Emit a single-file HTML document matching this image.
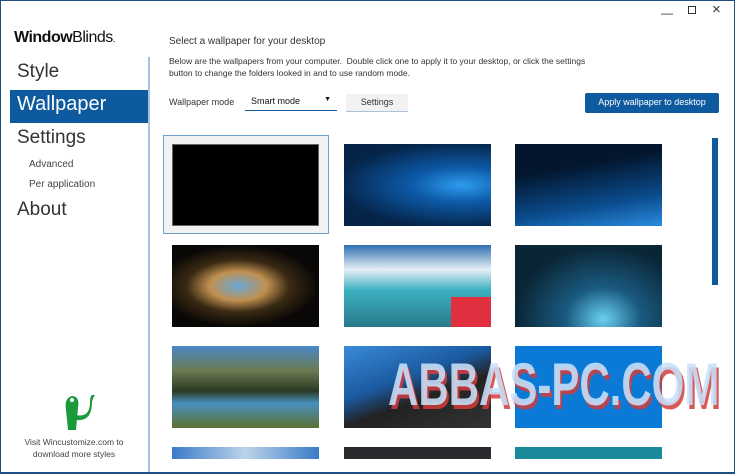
<!DOCTYPE html>
<html><head><style>
*{margin:0;padding:0;box-sizing:border-box}
body{width:735px;height:474px;overflow:hidden;background:#fff;font-family:"Segoe UI","Liberation Sans",sans-serif;position:relative;color:#333}
.frame{position:absolute;left:0;top:0;width:735px;height:474px;border:1px solid #1d4f80;border-bottom:2px solid #1d4f80}
.a{position:absolute}
.t{position:absolute;width:147px;height:82px}
</style></head><body>
<div class="frame"></div>
<div class="a" style="left:661px;top:6px;font-size:12px;color:#333">&#8212;</div>
<div class="a" style="left:688px;top:6px;width:8px;height:8px;border:1px solid #333"></div>
<div class="a" style="left:712px;top:1px;font-size:15px;color:#333">&#215;</div>

<div class="a" style="left:14px;top:29px;font-size:16px;color:#111;letter-spacing:-0.5px"><b>Window</b>Blinds<span style="font-size:10px">.</span></div>
<div class="a" style="left:17px;top:61px;font-size:19px;color:#333">Style</div>
<div class="a" style="left:10px;top:90px;width:139px;height:33px;background:#0d5a9e"></div>
<div class="a" style="left:17px;top:93px;font-size:20px;color:#fff">Wallpaper</div>
<div class="a" style="left:17px;top:127px;font-size:19px;color:#333">Settings</div>
<div class="a" style="left:29px;top:159px;font-size:10px;color:#444">Advanced</div>
<div class="a" style="left:29px;top:179px;font-size:10px;color:#444">Per application</div>
<div class="a" style="left:17px;top:199px;font-size:19px;color:#333">About</div>
<div class="a" style="left:148px;top:57px;width:2px;height:415px;background:#a9c3de"></div>
<svg class="a" style="left:50px;top:390px" width="50" height="45"><path d="M18 40 L16 20 Q14 8 22 6 Q30 6 28 18 L26 40Z" fill="#1a9a3a"/><path d="M26 25 Q40 28 40 12 Q40 2 46 6 Q44 4 42 12 Q42 32 26 30Z" fill="#1a9a3a"/><circle cx="22" cy="10" r="2" fill="#fff"/></svg>
<div class="a" style="left:0;top:436px;width:148px;text-align:center;font-size:8.5px;line-height:12px;color:#444">Visit Wincustomize.com to<br>download more styles</div>

<div class="a" style="left:169px;top:36px;font-size:10px;color:#333">Select a wallpaper for your desktop</div>
<div class="a" style="left:169px;top:55px;font-size:8.5px;line-height:12px;color:#333">Below are the wallpapers from your computer.&nbsp; Double click one to apply it to your desktop, or click the settings<br>button to change the folders looked in and to use random mode.</div>
<div class="a" style="left:169px;top:97px;font-size:9px;color:#333">Wallpaper mode</div>
<div class="a" style="left:245px;top:94px;width:92px;height:17px;border-bottom:1px solid #1a5a9e;font-size:9px;padding:2px 0 0 6px;color:#111">Smart mode<span style="position:absolute;right:6px;top:2px;font-size:7px">&#9660;</span></div>
<div class="a" style="left:346px;top:94px;width:62px;height:18px;background:#f2f2f2;border-bottom:1px solid #a9c3de;font-size:9px;text-align:center;padding-top:3px">Settings</div>
<div class="a" style="left:585px;top:93px;width:134px;height:20px;background:#0d5a9e;border-radius:2px;color:#fff;font-size:9px;text-align:center;padding-top:4px">Apply wallpaper to desktop</div>

<div class="a" style="left:163px;top:135px;width:166px;height:99px;background:#f2f2f2;border:1px solid #6ea0d0"></div>
<div class="t" style="left:172px;top:144px;background:#000;border:1px solid #666"></div>
<div class="t" style="left:344px;top:144px;background:radial-gradient(ellipse at 80% 50%,#2e9cf0 0%,#0d5aa8 30%,#052448 75%)"></div>
<div class="t" style="left:515px;top:144px;background:linear-gradient(170deg,#03162e 30%,#0a4b8c 70%,#2a8be0 100%)"></div>
<div class="t" style="left:172px;top:245px;background:radial-gradient(ellipse at 45% 50%,#6aa8d8 0%,#c09050 25%,#3a2a14 45%,#0a0806 70%)"></div>
<div class="t" style="left:344px;top:245px;background:linear-gradient(180deg,#2f6fb0 0%,#e6eef6 30%,#3cb0c0 55%,#2a7a8a 100%)"><div style="position:absolute;right:0;bottom:0;width:40px;height:30px;background:#e03040"></div></div>
<div class="t" style="left:515px;top:245px;background:radial-gradient(ellipse at 60% 90%,#6ad0f0 0%,#1a5a80 30%,#0a2636 70%)"></div>
<div class="t" style="left:172px;top:346px;background:linear-gradient(180deg,#4a88c8 0%,#6a7a50 30%,#2a3a24 55%,#4a90c0 70%,#5a7030 100%)"></div>
<div class="t" style="left:344px;top:346px;background:linear-gradient(160deg,#3a8ad8 0%,#1a5aa0 40%,#222 60%,#333 100%)"></div>
<div class="t" style="left:515px;top:346px;background:#0a7ad6"></div>
<div class="t" style="left:172px;top:447px;height:12px;background:linear-gradient(90deg,#3a7ac8,#bcd4ea,#3a7ac8)"></div>
<div class="t" style="left:344px;top:447px;height:12px;background:#2a2a2e"></div>
<div class="t" style="left:515px;top:447px;height:12px;background:#1a8a9a"></div>
<div class="a" style="left:712px;top:138px;width:6px;height:147px;background:#0d5a9e"></div>
<div class="a" style="left:388px;top:352px;white-space:nowrap;font-family:'Liberation Sans',sans-serif;font-weight:bold;font-size:60px;line-height:66px;color:rgba(200,225,250,0.88);text-shadow:3px 4px 0 rgba(210,60,60,0.85);transform:scaleX(0.7);transform-origin:left">ABBAS-PC.COM</div>
</body></html>
